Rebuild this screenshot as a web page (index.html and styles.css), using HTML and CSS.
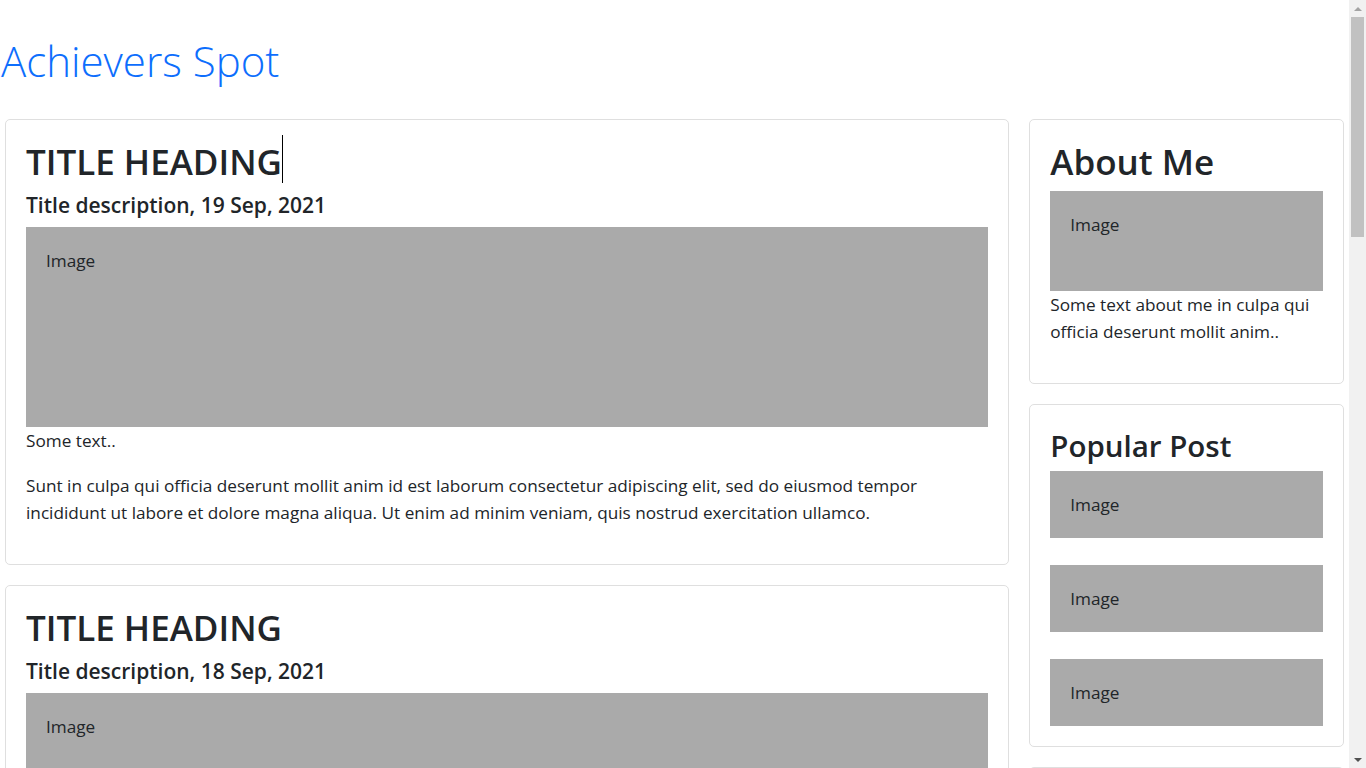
FILE: index.html
```html
<!DOCTYPE html>
<html>
<head>
    <title>Achievers Spot</title>
    <link rel="stylesheet" href="styles.css">
</head>
<body>
    <!-- Header -->
    <div class="header">
        <h1 class="brand">Achievers Spot</h1>
    </div>

    <div class="row">
        <div class="left-column">
            <div class="card">
                <h2 class="post-title">TITLE HEADING<span class="caret"></span></h2>
                <h5 class="post-date">Title description, 19 Sep, 2021</h5>
                <div class="fakeimg tall">Image</div>
                <p>Some text..</p>
                <p>Sunt in culpa qui officia deserunt mollit anim id est laborum consectetur adipiscing elit, sed do eiusmod tempor incididunt ut labore et dolore magna aliqua. Ut enim ad minim veniam, quis nostrud exercitation ullamco.</p>
            </div>
            <div class="card">
                <h2 class="post-title">TITLE HEADING</h2>
                <h5 class="post-date">Title description, 18 Sep, 2021</h5>
                <div class="fakeimg tall">Image</div>
                <p>Some text..</p>
                <p>Sunt in culpa qui officia deserunt mollit anim id est laborum consectetur adipiscing elit, sed do eiusmod tempor incididunt ut labore et dolore magna aliqua. Ut enim ad minim veniam, quis nostrud exercitation ullamco.</p>
            </div>
        </div>

        <div class="right-column">
            <div class="card">
                <h2 class="post-title">About Me</h2>
                <div class="fakeimg short">Image</div>
                <p>Some text about me in culpa qui officia deserunt mollit anim..</p>
            </div>
            <div class="card">
                <h3 class="side-title">Popular Post</h3>
                <div class="fakeimg">Image</div><br>
                <div class="fakeimg">Image</div><br>
                <div class="fakeimg">Image</div>
            </div>
            <div class="card">
                <h3 class="side-title">Follow Me</h3>
                <p>Some text..</p>
            </div>
        </div>
    </div>

    <!-- Window scrollbar -->
    <div class="scrollbar">
        <div class="scroll-btn"><span class="arrow-up"></span></div>
        <div class="scroll-thumb"></div>
        <div class="scroll-track"></div>
        <div class="scroll-btn"><span class="arrow-down"></span></div>
    </div>
</body>
</html>
```

FILE: styles.css
```css
* {
    box-sizing: border-box;
}

body {
    width: 1349px;
    margin: 0;
    padding: 0 5px 40px;
    font-family: "Open Sans", "Noto Sans", sans-serif;
    font-size: 17.2px;
    line-height: 27px;
    color: #212529;
    background-color: #fff;
}

.header {
    padding: 34px 0 12px;
    margin-left: -4px;
}

.brand {
    margin: 0;
    font-size: 42px;
    font-weight: 300;
    line-height: 53px;
    color: #0d6efd;
}

.row {
    display: flex;
}

.left-column {
    flex: 0 0 75%;
}

.right-column {
    flex: 0 0 25%;
    padding-left: 20px;
}

.card {
    margin-top: 20px;
    padding: 20px;
    border: 1px solid #dfdfdf;
    border-radius: 5px;
    background-color: #fff;
}

.post-title {
    margin: 0 0 8px;
    font-size: 35px;
    font-weight: 600;
    line-height: 43px;
}

.caret {
    display: inline-block;
    width: 1px;
    height: 48px;
    margin: -6px 0 -8px;
    background-color: #000;
}

.post-date {
    margin: 0 0 8px;
    font-size: 21px;
    font-weight: 600;
    line-height: 28px;
}

.side-title {
    margin: 0 0 5px;
    font-size: 29.5px;
    font-weight: 600;
    line-height: 41px;
}

.fakeimg {
    padding: 20px;
    background-color: #aaa;
}

.fakeimg.tall {
    height: 200px;
}

.fakeimg.short {
    height: 100px;
}

p {
    margin: 0 0 18px;
}

/* scrollbar drawn over the right edge */
.scrollbar {
    position: fixed;
    top: 0;
    right: 0;
    width: 17px;
    height: 100vh;
    display: flex;
    flex-direction: column;
    background-color: #f1f1f1;
}

.scroll-btn {
    height: 17px;
    display: flex;
    align-items: center;
    justify-content: center;
}

.arrow-up {
    border-left: 4px solid transparent;
    border-right: 4px solid transparent;
    border-bottom: 4px solid #a3a3a3;
}

.arrow-down {
    border-left: 4px solid transparent;
    border-right: 4px solid transparent;
    border-top: 4px solid #505050;
}

.scroll-thumb {
    height: 220px;
    margin: 0 2px;
    background-color: #c1c1c1;
}

.scroll-track {
    flex: 1;
}
```
